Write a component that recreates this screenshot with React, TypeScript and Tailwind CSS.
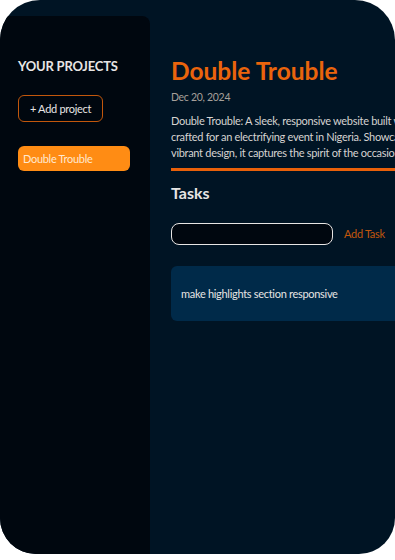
export default function App() {
  return (
    <div className="min-h-[560px] bg-white font-['Lato',sans-serif]">
      <div className="flex h-[554px] overflow-hidden rounded-t-[40px] rounded-b-[36px] bg-[#001424]">
        <aside className="mt-4 w-[150px] shrink-0 rounded-tr-lg bg-[#00070f] px-[18px] pt-[40px]">
          <h2 className="text-[13px] font-bold uppercase leading-[20px] tracking-[-0.2px] text-stone-200">
            Your Projects
          </h2>
          <button className="mt-[19px] w-[85px] rounded-md border border-[#c2570c] py-[5px] text-[11px] leading-[15px] tracking-[-0.3px] text-stone-200">
            + Add project
          </button>
          <ul className="mt-[24px]">
            <li className="w-[112px] rounded-md bg-[#ff8c14] px-[5px] py-[5px] text-[11px] leading-[15px] tracking-[-0.3px] text-[#ffe8cf]">
              Double Trouble
            </li>
          </ul>
        </aside>

        <main className="w-[560px] shrink-0 pl-[21px] pt-[54px]">
          <header className="border-b-[3px] border-[#e8600a] pb-[7px]">
            <h1 className="text-[24.5px] font-bold leading-[34px] text-[#ea640c]">Double Trouble</h1>
            <p className="pt-[1px] text-[10.5px] leading-[16px] tracking-[-0.3px] text-stone-400">Dec 20, 2024</p>
            <p className="mt-[8px] whitespace-nowrap text-[11px] leading-[16px] tracking-[-0.3px] text-stone-300">
              <span className="block">Double Trouble: A sleek, responsive website built with React and Tailwind,</span>
              <span className="block">crafted for an electrifying event in Nigeria. Showcasing bold visuals and a</span>
              <span className="block">vibrant design, it captures the spirit of the occasion.</span>
            </p>
          </header>

          <h2 className="mt-[10px] text-[16px] font-bold text-stone-200">Tasks</h2>
          <div className="mt-[18px] flex items-center gap-[11px]">
            <input className="h-[22px] w-[162px] rounded-lg border-[1.5px] border-stone-200 bg-[#00070f]" />
            <button className="text-[11px] tracking-[-0.3px] text-[#c2570c]">Add Task</button>
          </div>
          <ul className="mt-[21px] rounded-md bg-[#002a49] px-[10px] py-[19px]">
            <li className="text-[11px] leading-[17px] tracking-[-0.3px] text-stone-200">make highlights section responsive</li>
          </ul>
        </main>
      </div>
    </div>
  );
}
